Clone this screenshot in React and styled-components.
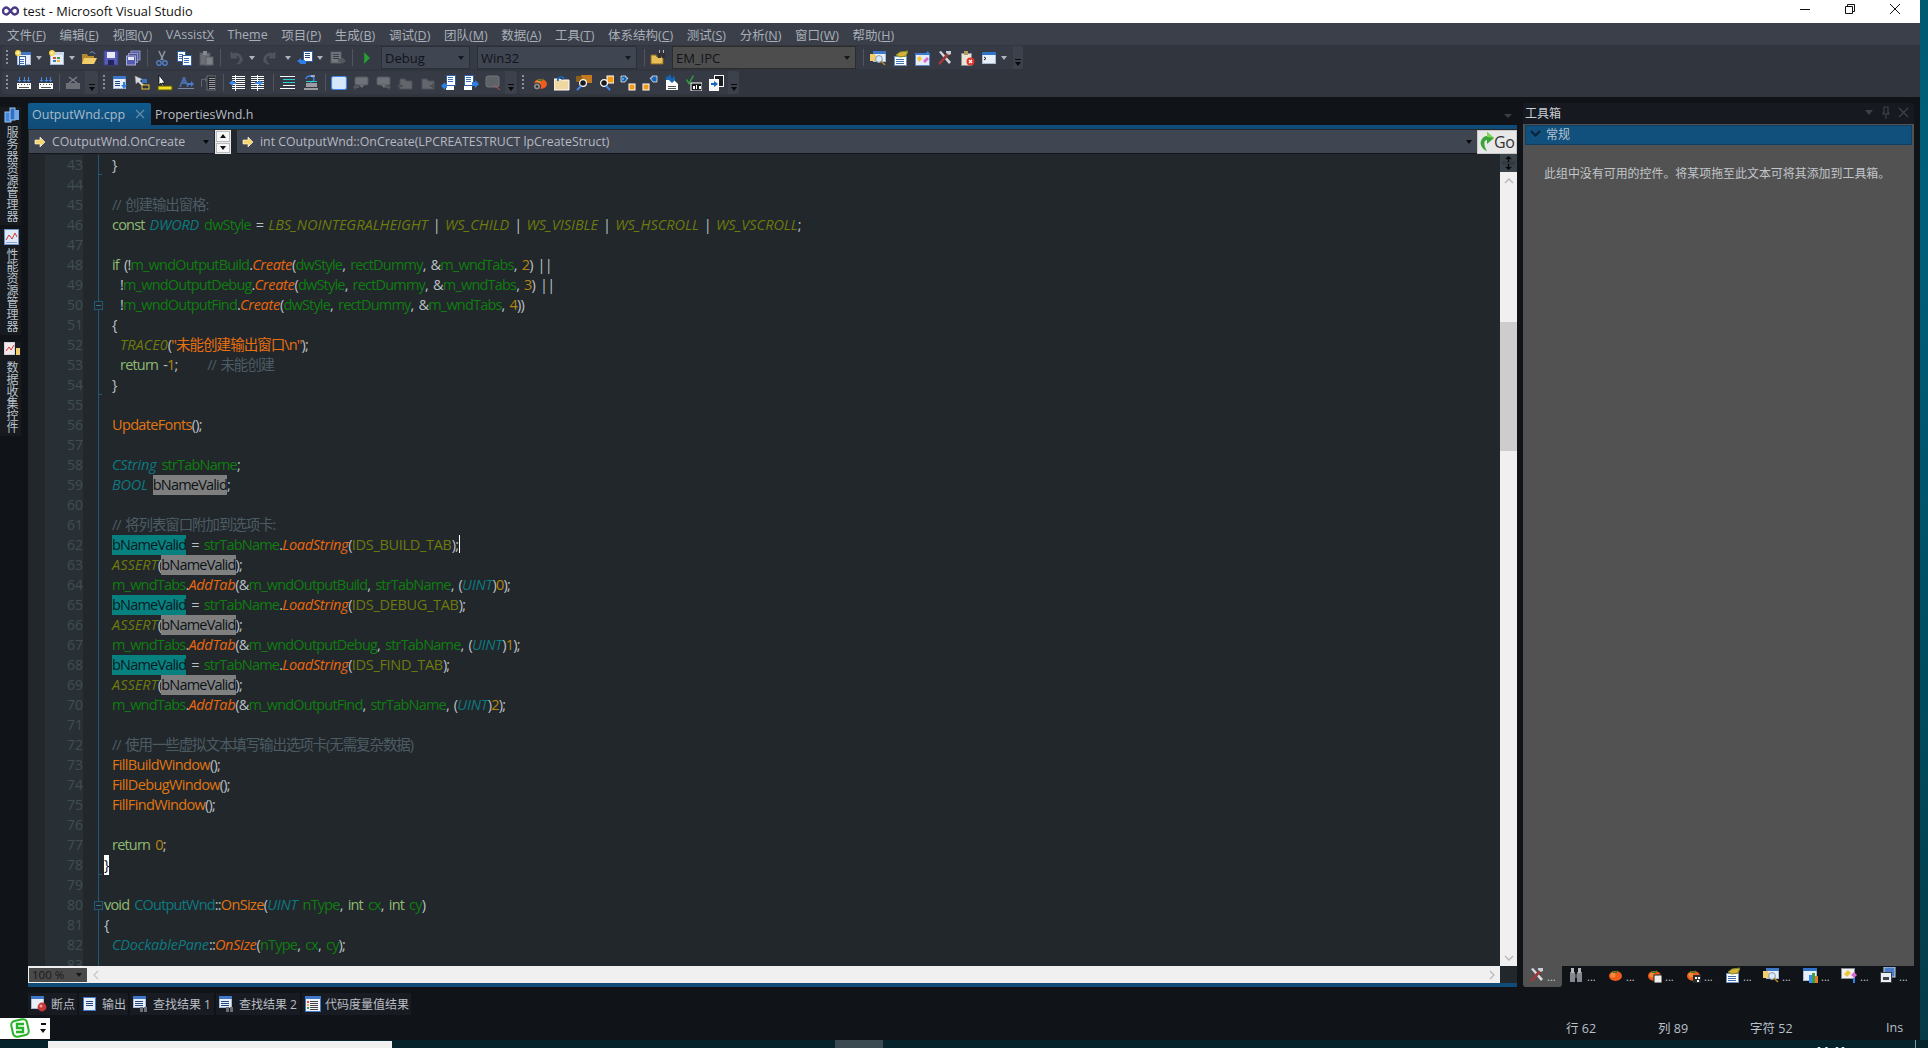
import React from "react";
import styled, { createGlobalStyle } from "styled-components";

const UI_FONT = `"Open Sans", "Noto Sans CJK SC", sans-serif`;

const GlobalStyle = createGlobalStyle`
  html, body { margin: 0; padding: 0; background: #101318; overflow: hidden; }
  * { box-sizing: border-box; }
`;

/* ---------- little toolbar pictures, all on a 16x16 grid ---------- */
const Lines = ({ x, y, w, n = 3, c = "#3f6fb0" }) => (
  <>
    {Array.from({ length: n }).map((_, i) => (
      <rect key={i} x={x} y={y + i * 2} width={w} height="1" fill={c} />
    ))}
  </>
);
const Sheet = ({ x, y, w, h, c = "#2f5f9f", f = "#fff" }) => (
  <rect x={x + 0.5} y={y + 0.5} width={w} height={h} fill={f} stroke={c} />
);
const Win = ({ x = 1, y = 1, w = 13, h = 13, bar = "#3f78c8" }) => (
  <>
    <rect x={x + 0.5} y={y + 0.5} width={w} height={h} fill="#e9eff8" stroke="#a8bad4" />
    <rect x={x} y={y} width={w + 1} height="3" fill={bar} />
  </>
);
const Star = ({ x = 3, y = 3 }) => (
  <>
    <circle cx={x} cy={y} r="3" fill="#f6d24a" />
    <circle cx={x} cy={y} r="1.4" fill="#fff3a8" />
  </>
);
const ArrowL = ({ y = 11, x = 0, c = "#2f7fe0" }) => (
  <path d={`M${x} ${y}l4-3v2h4v2h-4v2z`} fill={c} />
);
const Bubble = ({ c = "#6e7278" }) => (
  <>
    <rect x="2" y="2" width="13" height="8" rx="1.5" fill={c} stroke="#55585e" />
    <path d="M6 10h5l-2 3z" fill={c} />
  </>
);
const GreyFolder = ({ c = "#63666c" }) => (
  <path d="M3 4h5l1 2h6v8H3z" fill={c} stroke="#4f5258" />
);
const Tomato = () => (
  <>
    <ellipse cx="8.5" cy="9" rx="6.5" ry="5" fill="#ee5d1e" />
    <ellipse cx="6" cy="8" rx="2.5" ry="2.5" fill="#f58a3c" />
    <path d="M5 3.5l3 1.5 3-2-1 3H6z" fill="#2f7a2a" />
  </>
);
const Keys = ({ c = "#fff", a = "#4a90e8" }) => (
  <>
    <rect x="1" y="8" width="14" height="6" fill={c} />
    {[2, 5, 8, 11, 13].map((x) => (
      <rect key={x} x={x} y="9" width="1" height="1" fill="#555" />
    ))}
    <rect x="3" y="12" width="10" height="1" fill="#555" />
    {[3, 8, 12].map((x) => (
      <path key={x} d={`M${x} 2h1v3h1.5l-2 2-2-2H${x}z`} fill={a} />
    ))}
  </>
);
const Hammer = () => (
  <>
    <path d="M3 2l2-1 10 11-2 2z" fill="#d8dade" />
    <path d="M13 1l2 2L4 15l-2-2z" fill="#9a3a3a" />
    <path d="M10 1h5v3l-2 1-3-2z" fill="#c9ccd2" />
  </>
);
const Mag = ({ x = 9, y = 9 }) => (
  <>
    <circle cx={x} cy={y} r="3.4" fill="#d9ecff" stroke="#8a97a8" />
    <path d={`M${x + 2} ${y + 2}l4 4`} stroke="#b58a2a" strokeWidth="1.6" />
  </>
);
const Boxes = ({ dir }) => (
  <>
    <rect x={dir ? 9 : 1} y="9" width="6" height="6" fill="#f09a18" stroke="#fff" />
    <path d={dir ? "M1 1h5v2h2l-3 4H1zM3 3v2" : "M15 1h-5v2H8l3 4h4z"} fill="#1566b8" stroke="#fff" strokeWidth=".7" />
  </>
);

const ICONS = {
  newProject: (
    <>
      <Win x={2} y={2} h={12} />
      <Star />
      <Sheet x={4} y={6} w={6} h={9} />
      <Lines x={5} y={9} w={4} />
    </>
  ),
  addItem: (
    <>
      <Win x={1} y={2} h={12} bar="#c9d5e8" />
      <Star />
      <rect x="4" y="7" width="3" height="2" fill="#e04a3a" />
      <rect x="8" y="7" width="3" height="2" fill="#3aa04a" />
      <rect x="4" y="10" width="3" height="2" fill="#3a7ad0" />
      <rect x="8" y="10" width="3" height="2" fill="#f0b030" />
    </>
  ),
  open: (
    <>
      <path d="M1 4h5l1 2h6v8H1z" fill="#b58a2e" />
      <path d="M3 8h13l-3 6H1z" fill="#f2cd6c" />
      <path d="M9 3c2-2 4-1 5 1" fill="none" stroke="#7ea3d8" />
    </>
  ),
  save: (
    <>
      <rect x="1" y="1" width="14" height="14" fill="#565cb8" stroke="#3a3f8a" />
      <rect x="4" y="2" width="8" height="6" fill="#e8eaf6" />
      <rect x="5" y="10" width="6" height="5" fill="#23265c" />
    </>
  ),
  saveAll: (
    <>
      <rect x="6" y="1" width="9" height="9" fill="#5a5f9c" stroke="#8f94c8" />
      <rect x="3.5" y="3.5" width="9" height="9" fill="#4f5490" stroke="#8f94c8" />
      <rect x="1.5" y="6" width="9" height="9" fill="#565cb0" stroke="#a8acd8" />
      <rect x="3" y="7" width="6" height="3" fill="#e8eaf6" />
    </>
  ),
  cut: (
    <>
      <path d="M5 1l4 9M11 1L7 10" stroke="#8d96a6" strokeWidth="1.5" />
      <circle cx="5" cy="13" r="2.2" fill="none" stroke="#4f7fc4" strokeWidth="1.4" />
      <circle cx="11" cy="13" r="2.2" fill="none" stroke="#4f7fc4" strokeWidth="1.4" />
    </>
  ),
  copy: (
    <>
      <Sheet x={1} y={1} w={8} h={10} />
      <Lines x={3} y={4} w={4} />
      <Sheet x={6} y={5} w={9} h={10} />
      <Lines x={8} y={8} w={5} />
    </>
  ),
  paste: (
    <>
      <rect x="2" y="3" width="10" height="12" fill="#6b6e74" stroke="#54575c" />
      <rect x="5" y="1" width="4" height="4" fill="#85888e" />
      <rect x="8" y="7" width="7" height="8" fill="#7d8087" stroke="#5c5f65" />
    </>
  ),
  undo: <path d="M3 2v6h6L7 6c3-1 5 1 5 3s-1 4-3 5c4 0 6-3 5-6-1-4-6-6-9-4z" fill="#4e5158" stroke="#62656b" strokeWidth=".5" />,
  redo: <path d="M13 2v6H7l2-2C6 5 4 7 4 9s1 4 3 5c-4 0-6-3-5-6 1-4 6-6 9-4z" fill="#4e5158" stroke="#62656b" strokeWidth=".5" />,
  nav: (
    <>
      <Sheet x={6} y={1} w={9} h={10} />
      <Lines x={8} y={3} w={5} c="#24457c" />
      <ArrowL y={11} x={0} />
      <rect x="3" y="11" width="6" height="3" fill="#2f7fe0" />
    </>
  ),
  findGrey: (
    <>
      <rect x="1" y="2" width="10" height="11" fill="#75787e" stroke="#5a5d63" />
      <Lines x={3} y={4} w={6} c="#3a3d42" />
      <path d="M8 9h4V7l4 4-4 3v-2H8z" fill="#55585e" />
    </>
  ),
  run: <path d="M5 2l6 6-6 6z" fill="#2f9a3a" stroke="#1d6a26" strokeWidth=".6" />,
  folderFind: (
    <>
      <path d="M1 5h5l1 2h6v7H1z" fill="#e8be58" stroke="#8a6a22" />
      <rect x="8" y="2" width="3" height="6" fill="#2d2f33" />
      <rect x="12" y="2" width="3" height="6" fill="#2d2f33" />
      <rect x="9" y="0" width="1" height="3" fill="#bbb" />
      <rect x="13" y="0" width="1" height="3" fill="#bbb" />
    </>
  ),
  solutionFind: (
    <>
      <Win x={3} y={1} w={12} h={10} />
      <path d="M0 4h5l1 2h3v5H0z" fill="#f2cd6c" />
      <Mag x={9} y={9} />
    </>
  ),
  classView: (
    <>
      <Sheet x={2} y={6} w={12} h={9} c="#6f8fbf" />
      <Lines x={4} y={9} w={8} />
      <path d="M4 5l4-3 8-1-2 5-6 1z" fill="#d8b238" stroke="#7d8a2e" />
    </>
  ),
  props: (
    <>
      <Sheet x={1} y={3} w={14} h={12} c="#5c86c4" f="#e4ecf8" />
      <rect x="1" y="3" width="15" height="2" fill="#3f78c8" />
      <path d="M3 8l3-2 2 3-3 3z" fill="#f2c53a" />
      <path d="M9 11l4-4 2 2-4 4z" fill="#d86ad0" />
      <path d="M11 4l3-3 1 2-2 2z" fill="#2a86e8" />
    </>
  ),
  tools: <Hammer />,
  clipX: (
    <>
      <Sheet x={2} y={3} w={10} h={12} c="#8a8d94" f="#e9e4d6" />
      <rect x="5" y="1" width="4" height="4" fill="#b59a64" />
      <circle cx="11.5" cy="11.5" r="4" fill="#e0342a" />
      <path d="M10 10l3 3M13 10l-3 3" stroke="#fff" strokeWidth="1.2" />
    </>
  ),
  cmd: (
    <>
      <Win x={1} y={2} w={13} h={11} bar="#2f74c8" />
      <path d="M3 7l2 1.5L3 10" stroke="#111" fill="none" />
    </>
  ),
  keys1: <Keys />,
  keys2: <Keys a="#3c8cf0" />,
  keysGrey: (
    <>
      <rect x="1" y="8" width="14" height="6" fill="#6b6e74" />
      <path d="M4 2l8 6M12 2L4 8" stroke="#7b7e84" strokeWidth="1.5" />
    </>
  ),
  winDown: (
    <>
      <Win x={1} y={1} w={12} h={12} />
      <Lines x={3} y={6} w={5} c="#24457c" />
      <path d="M9 10h2V7h2v3h2l-3 4z" fill="#2f7fe0" />
    </>
  ),
  pointer: (
    <>
      <path d="M1 1l7 3-2 2 4 4-2 1-4-4-2 2z" fill="#d6dae0" stroke="#8a8d94" strokeWidth=".5" />
      <rect x="8" y="10" width="7" height="4" fill="#2f3238" stroke="#e8c83a" />
      <rect x="8" y="4" width="5" height="4" fill="#3a74c4" />
    </>
  ),
  cursor: (
    <>
      <path d="M2 0v10l2-2 2 4 1-1-2-3h3z" fill="#fff" stroke="#000" strokeWidth=".7" />
      <rect x="1" y="11" width="14" height="4" fill="#f0e020" stroke="#57550e" />
    </>
  ),
  fontA: (
    <>
      <path d="M1 12L5 2h2l4 10H9l-1-3H4l-1 3z" fill="#4a6aa8" />
      <path d="M9 8h4V6l3 3-3 3v-2H9z" fill="#4a7cc8" />
      <rect x="0" y="13" width="16" height="1" fill="#7a8aa0" />
    </>
  ),
  listGrey: (
    <>
      <rect x="7" y="1" width="9" height="14" fill="#24262b" stroke="#6b6e74" />
      <Lines x={9} y={3} w={6} n={6} c="#9a9da4" />
      <path d="M1 4h4V2l2 3-2 2V5H2v7H1z" fill="#60636a" />
    </>
  ),
  alignL: (
    <>
      <Lines x={3} y={1} w={13} n={7} c="#fff" />
      <rect x="6" y="0" width="1" height="16" fill="#fff" />
      <path d="M0 8l4-3v2h3v2H4v2z" fill="#3c8cf0" />
    </>
  ),
  alignR: (
    <>
      <Lines x={0} y={1} w={13} n={7} c="#fff" />
      <rect x="6" y="0" width="1" height="16" fill="#fff" />
      <path d="M12 8L8 5v2H4v2h4v2z" fill="#3c8cf0" />
    </>
  ),
  listCyan: (
    <>
      <rect x="0" y="1" width="15" height="1" fill="#fff" />
      <rect x="3" y="4" width="12" height="1" fill="#28d0d0" />
      <rect x="3" y="7" width="12" height="1" fill="#28d0d0" />
      <rect x="3" y="10" width="12" height="1" fill="#fff" />
      <rect x="0" y="13" width="15" height="1" fill="#fff" />
    </>
  ),
  listLoop: (
    <>
      <path d="M3 4a4 3 0 1 1 4 3" fill="none" stroke="#3c8cf0" strokeWidth="1.4" />
      <path d="M8 1h4M3 9h11M3 11h11M1 14h14" stroke="#fff" />
      <rect x="3" y="6" width="11" height="1" fill="#28d0d0" />
    </>
  ),
  block: <rect x="0.5" y="1.5" width="15" height="13" rx="2" fill="#d6e6fb" stroke="#3f88e6" strokeWidth="1.2" />,
  bubbleL: (
    <>
      <Bubble />
      <path d="M0 12l3-3v2h3v2H3v2z" fill="#55585e" />
    </>
  ),
  bubbleR: (
    <>
      <Bubble />
      <path d="M16 12l-3-3v2h-3v2h3v2z" fill="#55585e" />
    </>
  ),
  folderL: (
    <>
      <GreyFolder />
      <path d="M0 11l3-3v2h3v2H3v2z" fill="#4a4d52" />
    </>
  ),
  folderR: (
    <>
      <GreyFolder />
      <path d="M16 11l-3-3v2h-2v2h2v2z" fill="#4a4d52" />
    </>
  ),
  docL: (
    <>
      <Sheet x={5} y={0} w={9} h={10} />
      <Lines x={7} y={2} w={5} />
      <rect x="5" y="11" width="8" height="4" fill="#fff" />
      <path d="M0 11l4-4v2h2v4H4v2z" fill="#2f7fe0" />
    </>
  ),
  docR: (
    <>
      <Sheet x={1} y={0} w={9} h={10} />
      <Lines x={3} y={2} w={5} />
      <rect x="1" y="11" width="8" height="4" fill="#fff" />
      <path d="M16 9l-4-4v2H9v4h3v2z" fill="#2f7fe0" />
    </>
  ),
  bubbleX: (
    <>
      <rect x="1" y="1" width="13" height="11" rx="2" fill="#5e6167" stroke="#72757b" />
      <path d="M9 10l6 5" stroke="#b05a50" />
    </>
  ),
  tomatoGear: (
    <>
      <Tomato />
      <circle cx="5" cy="11.5" r="3.6" fill="#8b8e94" stroke="#2d2f33" />
      <circle cx="5" cy="11.5" r="1.2" fill="#2d2f33" />
    </>
  ),
  folderLoop: (
    <>
      <path d="M0 4h6l1 1h8v10H0z" fill="#f0d6a0" stroke="#fff" />
      <path d="M4 6a3 3 0 0 1 5-3" fill="none" stroke="#1566b8" strokeWidth="1.6" />
      <path d="M8 1l3 2-3 2z" fill="#1566b8" />
    </>
  ),
  findBox: (
    <>
      <rect x="5" y="0" width="11" height="8" fill="#c27a1c" />
      <rect x="0" y="1" width="6" height="6" fill="#8a5f1c" />
      <circle cx="7" cy="8" r="3.4" fill="#17191d" stroke="#fff" strokeWidth="1.2" />
      <path d="M5 11l-4 4" stroke="#3c8cf0" strokeWidth="1.8" />
    </>
  ),
  findBox2: (
    <>
      <rect x="9" y="1" width="7" height="7" fill="#f09a18" stroke="#fff" />
      <circle cx="6" cy="8" r="3.4" fill="#17191d" stroke="#fff" strokeWidth="1.2" />
      <path d="M8 11l4 4" stroke="#3c8cf0" strokeWidth="1.8" />
    </>
  ),
  boxIn: <Boxes />,
  boxOut: <Boxes dir />,
  pageDown: (
    <>
      <path d="M2 5h8l4 4v6H2z" fill="#fff" />
      <path d="M5 0h2v3h2v-2l2 1v3l-3 3-3-3H2V2l2-1v2z" fill="#1566b8" />
      <Lines x={4} y={11} w={8} n={2} c="#555" />
    </>
  ),
  spell: (
    <>
      <path d="M1 4l2 3 4-7 1 1-5 9-3-5z" fill="#2fa040" />
      <rect x="5" y="8" width="11" height="8" fill="#17191d" stroke="#fff" />
      <rect x="7" y="11" width="2" height="3" fill="#fff" />
      <rect x="10" y="10" width="1" height="4" fill="#fff" />
      <rect x="13" y="11" width="2" height="3" fill="#fff" />
    </>
  ),
  pages: (
    <>
      <Sheet x={6} y={0} w={9} h={11} c="#fff" f="#1c1e22" />
      <Sheet x={1} y={4} w={9} h={11} c="#fff" f="#f4f4f4" />
      <path d="M3 8h3V6l4 3-4 3v-2H3z" fill="#1566b8" />
    </>
  ),
  server: (
    <>
      <rect x="1" y="5" width="6" height="10" fill="#3f8ae0" stroke="#9fc4f0" />
      <rect x="6" y="1" width="5" height="12" fill="#2f6fc4" stroke="#9fc4f0" />
      <rect x="11" y="3" width="4" height="10" fill="#6fa8e8" />
    </>
  ),
  perf: (
    <>
      <rect x="0.5" y="0.5" width="14" height="15" fill="#dfe9f8" stroke="#6f93c8" />
      <path d="M2 11l3-5 3 4 3-6 2 4" fill="none" stroke="#d0382e" />
      <rect x="2" y="13" width="11" height="1" fill="#8fa6c8" />
    </>
  ),
  collect: (
    <>
      <rect x="0.5" y="0.5" width="10" height="12" fill="#f4e8e8" stroke="#d0d4da" />
      <path d="M2 9l3-4 2 3 3-5" fill="none" stroke="#d0382e" />
      <rect x="12" y="6" width="4" height="7" fill="#f2cd6c" />
    </>
  ),
  breakpoint: (
    <>
      <Win x={0} y={0} w={12} h={12} />
      <circle cx="11" cy="11" r="4.4" fill="#c8373a" />
      <circle cx="10" cy="10" r="1.5" fill="#f2a09a" />
    </>
  ),
  output: (
    <>
      <rect x="1.5" y="1.5" width="12" height="13" fill="#e9eff8" stroke="#3f78c8" />
      <Lines x={4} y={5} w={7} n={3} c="#24457c" />
    </>
  ),
  findResult: (
    <>
      <Win x={0} y={0} w={12} h={11} />
      <Lines x={2} y={5} w={8} c="#24457c" />
      <rect x="7" y="11" width="3" height="5" fill="#6b6e74" />
      <rect x="11" y="11" width="3" height="5" fill="#6b6e74" />
    </>
  ),
  metrics: (
    <>
      <rect x="0.5" y="0.5" width="15" height="15" fill="#f0f4fa" stroke="#3f78c8" />
      <rect x="0" y="0" width="16" height="3" fill="#3f78c8" />
      <Lines x={5} y={5} w={8} n={5} c="#444" />
      <rect x="2" y="5" width="2" height="2" fill="#e04a3a" />
      <rect x="2" y="8" width="2" height="2" fill="#f0b030" />
      <rect x="2" y="11" width="2" height="2" fill="#3aa04a" />
    </>
  ),
  binoculars: (
    <>
      <rect x="2" y="5" width="5" height="10" fill="#85888e" />
      <rect x="9" y="5" width="5" height="10" fill="#85888e" />
      <rect x="3" y="1" width="3" height="5" fill="#b4b7bc" />
      <rect x="10" y="1" width="3" height="5" fill="#b4b7bc" />
      <rect x="7" y="7" width="2" height="4" fill="#50535a" />
    </>
  ),
  tomato: <Tomato />,
  tomatoBox: (
    <>
      <Tomato />
      <rect x="8" y="8" width="8" height="8" fill="#f0f0f0" stroke="#222" />
    </>
  ),
  tomatoDots: (
    <>
      <Tomato />
      <rect x="8" y="8" width="8" height="8" fill="#2a2c30" />
      <rect x="10" y="10" width="2" height="2" fill="#fff" />
      <rect x="13" y="10" width="2" height="2" fill="#fff" />
      <rect x="12" y="13" width="2" height="2" fill="#fff" />
    </>
  ),
  toolbox: (
    <>
      <Win x={1} y={1} w={13} h={12} bar="#2f74c8" />
      <rect x="7" y="8" width="3" height="8" fill="#3c8cf0" />
      <rect x="10" y="6" width="3" height="10" fill="#3aa04a" />
      <rect x="13" y="9" width="3" height="7" fill="#e07a2a" />
    </>
  ),
  tagDiff: (
    <>
      <Sheet x={0} y={1} w={13} h={10} c="#8a8d94" f="#f0f0f0" />
      <path d="M3 7l4-4 3 3-4 4z" fill="#e8c83a" />
      <path d="M10 8l3-3 3 3-3 3z" fill="#d86ad0" />
      <path d="M12 11h2v5h-2z" fill="#2a86e8" />
    </>
  ),
  panels: (
    <>
      <rect x="4" y="0" width="11" height="10" fill="#4a7cc8" stroke="#c8d4e8" />
      <rect x="0.5" y="5.5" width="11" height="10" fill="#e9eff8" stroke="#3a3d42" />
      <rect x="3" y="10" width="6" height="3" fill="#444" />
    </>
  ),
};

const Ico = ({ name, size = 16, className }) => (
  <svg className={className} width={size} height={size} viewBox="0 0 16 16">
    {ICONS[name]}
  </svg>
);

/* ---------- toolbar data: [kind, gap before, width for combos, label] ---------- */
const TOOLBAR_ONE = [
  ["grip", 4], ["newProject", 7], ["caret", 4], ["addItem", 6], ["caret", 3], ["open", 5],
  ["save", 6], ["saveAll", 6], ["sep", 6], ["cut", 6], ["copy", 6], ["paste", 6], ["sep", 6],
  ["undo", 7], ["caret", 4], ["redo", 6], ["caret", 6], ["nav", 5], ["caret", 3], ["findGrey", 6],
  ["sep", 6], ["run", 6], ["combo", 6, 89, "Debug"], ["combo", 7, 160, "Win32"], ["sep", 7],
  ["folderFind", 5], ["combo", 6, 184, "EM_IPC", true], ["sep", 7], ["solutionFind", 6],
  ["classView", 6], ["props", 6], ["tools", 6], ["clipX", 7], ["cmd", 6], ["caret", 3], ["more", 4, 10],
];
const TOOLBAR_TWO = [
  ["grip", 4], ["keys1", 8], ["keys2", 6], ["sep", 5], ["keysGrey", 5], ["more", 3, 13],
];
const TOOLBAR_THREE = [
  ["grip", 3], ["winDown", 7], ["pointer", 6], ["cursor", 7], ["fontA", 5], ["listGrey", 6], ["sep", 7],
  ["alignL", 5], ["alignR", 6], ["sep", 6], ["listCyan", 6], ["listLoop", 7], ["sep", 6], ["block", 5],
  ["bubbleL", 6], ["bubbleR", 6], ["folderL", 6], ["folderR", 6], ["docL", 6], ["docR", 6], ["bubbleX", 6],
  ["more", 3, 12],
];
const TOOLBAR_FOUR = [
  ["grip", 3], ["tomatoGear", 8], ["folderLoop", 6], ["findBox", 6], ["findBox2", 6], ["boxOut", 6],
  ["boxIn", 6], ["pageDown", 6], ["spell", 6], ["pages", 6], ["more", 3, 11],
];

const MENU = [
  ["文件(", "F", ")"], ["编辑(", "E", ")"], ["视图(", "V", ")"], ["VAssist", "X", ""], ["The", "m", "e"],
  ["项目(", "P", ")"], ["生成(", "B", ")"], ["调试(", "D", ")"], ["团队(", "M", ")"], ["数据(", "A", ")"],
  ["工具(", "T", ")"], ["体系结构(", "C", ")"], ["测试(", "S", ")"], ["分析(", "N", ")"], ["窗口(", "W", ")"],
  ["帮助(", "H", ")"],
];

/* ---------- the code, token by token ---------- */
const ARGS = (n, close) => [
  ["op", "("], ["id", "dwStyle"], ["op", ", "], ["id", "rectDummy"], ["op", ", &"], ["id", "m_wndTabs"],
  ["op", ", "], ["num", n], ["op", close],
];
const SETNAME = (tab) => [
  ["tealHi", "bNameValid"], ["op", " = "], ["id", "strTabName"], ["op", "."], ["method", "LoadString"],
  ["op", "("], ["sym", tab], ["op", ");"],
];
const ASSERT = [["macro", "ASSERT"], ["op", "("], ["greyHi", "bNameValid"], ["op", ");"]];
const ADDTAB = (wnd, n) => [
  ["id", "m_wndTabs"], ["op", "."], ["method", "AddTab"], ["op", "(&"], ["id", wnd], ["op", ", "],
  ["id", "strTabName"], ["op", ", ("], ["type", "UINT"], ["op", ")"], ["num", n], ["op", ");"],
];

const CODE = [
  { n: 43, indent: 1, fold: "end", t: [["op", "}"]] },
  { n: 44 },
  { n: 45, indent: 1, t: [["comment", "// 创建输出窗格:"]] },
  {
    n: 46, indent: 1,
    t: [
      ["kw", "const "], ["type", "DWORD"], ["id", " dwStyle"], ["op", " = "], ["macro", "LBS_NOINTEGRALHEIGHT"],
      ["op", " | "], ["macro", "WS_CHILD"], ["op", " | "], ["macro", "WS_VISIBLE"], ["op", " | "],
      ["macro", "WS_HSCROLL"], ["op", " | "], ["macro", "WS_VSCROLL"], ["op", ";"],
    ],
  },
  { n: 47 },
  { n: 48, indent: 1, t: [["kw", "if "], ["op", "(!"], ["id", "m_wndOutputBuild"], ["op", "."], ["method", "Create"], ...ARGS("2", ") ||")] },
  { n: 49, indent: 2, t: [["op", "!"], ["id", "m_wndOutputDebug"], ["op", "."], ["method", "Create"], ...ARGS("3", ") ||")] },
  { n: 50, indent: 2, fold: "box", t: [["op", "!"], ["id", "m_wndOutputFind"], ["op", "."], ["method", "Create"], ...ARGS("4", "))")] },
  { n: 51, indent: 1, t: [["op", "{"]] },
  { n: 52, indent: 2, t: [["macro", "TRACE0"], ["op", "("], ["str", "\"未能创建输出窗口\\n\""], ["op", ");"]] },
  { n: 53, indent: 2, t: [["kw", "return "], ["op", "-"], ["num", "1"], ["op", ";      "], ["comment", "// 未能创建"]] },
  { n: 54, indent: 1, fold: "end", t: [["op", "}"]] },
  { n: 55 },
  { n: 56, indent: 1, t: [["func", "UpdateFonts"], ["op", "();"]] },
  { n: 57 },
  { n: 58, indent: 1, t: [["type", "CString"], ["id", " strTabName"], ["op", ";"]] },
  { n: 59, indent: 1, t: [["type", "BOOL"], ["id", " "], ["greyHi", "bNameValid"], ["op", ";"]] },
  { n: 60 },
  { n: 61, indent: 1, t: [["comment", "// 将列表窗口附加到选项卡:"]] },
  { n: 62, indent: 1, caret: true, t: SETNAME("IDS_BUILD_TAB") },
  { n: 63, indent: 1, t: ASSERT },
  { n: 64, indent: 1, t: ADDTAB("m_wndOutputBuild", "0") },
  { n: 65, indent: 1, t: SETNAME("IDS_DEBUG_TAB") },
  { n: 66, indent: 1, t: ASSERT },
  { n: 67, indent: 1, t: ADDTAB("m_wndOutputDebug", "1") },
  { n: 68, indent: 1, t: SETNAME("IDS_FIND_TAB") },
  { n: 69, indent: 1, t: ASSERT },
  { n: 70, indent: 1, t: ADDTAB("m_wndOutputFind", "2") },
  { n: 71 },
  { n: 72, indent: 1, t: [["comment", "// 使用一些虚拟文本填写输出选项卡(无需复杂数据)"]] },
  { n: 73, indent: 1, t: [["func", "FillBuildWindow"], ["op", "();"]] },
  { n: 74, indent: 1, t: [["func", "FillDebugWindow"], ["op", "();"]] },
  { n: 75, indent: 1, t: [["func", "FillFindWindow"], ["op", "();"]] },
  { n: 76 },
  { n: 77, indent: 1, t: [["kw", "return "], ["num", "0"], ["op", ";"]] },
  { n: 78, fold: "end", t: [["cursor", "}"]] },
  { n: 79 },
  {
    n: 80, fold: "box",
    t: [
      ["kw", "void "], ["ctype", "COutputWnd"], ["op", "::"], ["func", "OnSize"], ["op", "("], ["type", "UINT"],
      ["id", " nType"], ["op", ", "], ["kw", "int "], ["id", "cx"], ["op", ", "], ["kw", "int "], ["id", "cy"], ["op", ")"],
    ],
  },
  { n: 81, t: [["op", "{"]] },
  {
    n: 82, indent: 1,
    t: [
      ["type", "CDockablePane"], ["op", "::"], ["method", "OnSize"], ["op", "("], ["id", "nType"], ["op", ", "],
      ["id", "cx"], ["op", ", "], ["id", "cy"], ["op", ");"],
    ],
  },
  { n: 83 },
];

const BOTTOM_TABS = [
  ["breakpoint", "断点", 49], ["output", "输出", 49], ["findResult", "查找结果 1", 84],
  ["findResult", "查找结果 2", 84], ["metrics", "代码度量值结果", 109],
];
const TOOL_TABS = ["tools", "binoculars", "tomato", "tomatoBox", "tomatoDots", "classView", "solutionFind", "toolbox", "tagDiff", "panels"];

const renderToolItem = ([kind, gap, width, label, dim], i) => {
  if (kind === "grip") return <Grip key={i} $gap={gap} />;
  if (kind === "sep") return <ToolSep key={i} $gap={gap} />;
  if (kind === "caret") return <ToolCaret key={i} $gap={gap} />;
  if (kind === "more") return <More key={i} $w={width} />;
  if (kind === "combo")
    return (
      <ToolCombo key={i} $gap={gap} $w={width} $dim={dim}>
        {label}
        <ComboArrow />
      </ToolCombo>
    );
  return <ToolIcon key={i} name={kind} $gap={gap} />;
};

export default function App() {
  return (
    <Screen>
      <GlobalStyle />
      <Upper>
        <Window>
          <TitleBar>
            <svg width="17" height="12" viewBox="0 0 17 12">
              <path d="M4.5 2.5C7 2.5 10 9.500 12.5 9.500a3.500 3.500 0 0 0 0-7C10 2.500 7 9.500 4.500 9.500a3.500 3.500 0 0 1 0-7z" fill="none" stroke="#4a3a86" strokeWidth="2.4" />
            </svg>
            <TitleText>test - Microsoft Visual Studio</TitleText>
            <WindowButtons>
              <WindowButton viewBox="0 0 12 12">
                <path d="M1 6.5h10" stroke="#111" />
              </WindowButton>
              <WindowButton viewBox="0 0 12 12">
                <path d="M3.5 3.5V1.5h7v7h-2M1.5 3.5h7v7h-7z" fill="none" stroke="#111" />
              </WindowButton>
              <WindowButton viewBox="0 0 12 12">
                <path d="M1 1l10 10M11 1L1 11" stroke="#111" />
              </WindowButton>
            </WindowButtons>
          </TitleBar>

          <MenuBar>
            {MENU.map(([before, key, after]) => (
              <MenuItem key={before}>
                {before}
                <u>{key}</u>
                {after}
              </MenuItem>
            ))}
          </MenuBar>

          <ToolArea>
            <ToolRow>
              <ToolPanel $w={1021}>{TOOLBAR_ONE.map(renderToolItem)}</ToolPanel>
            </ToolRow>
            <ToolRow>
              <ToolPanel $w={96}>{TOOLBAR_TWO.map(renderToolItem)}</ToolPanel>
              <ToolPanel $w={417}>{TOOLBAR_THREE.map(renderToolItem)}</ToolPanel>
              <ToolPanel $w={220}>{TOOLBAR_FOUR.map(renderToolItem)}</ToolPanel>
            </ToolRow>
          </ToolArea>

          <Workspace>
            <SideRail>
              <SideGroup $top={10}>
                <Ico name="server" />
                <SideLabel>服务器资源管理器</SideLabel>
              </SideGroup>
              <SideGroup $top={4}>
                <Ico name="perf" />
                <SideLabel>性能资源管理器</SideLabel>
              </SideGroup>
              <SideGroup $top={7}>
                <Ico name="collect" />
                <SideLabel>数据收集控件</SideLabel>
              </SideGroup>
            </SideRail>

            <DocColumn>
              <TabStrip>
                <DocTab $active>
                  OutputWnd.cpp
                  <TabClose viewBox="0 0 10 10">
                    <path d="M1 1l8 8M9 1L1 9" stroke="#5f8aa8" strokeWidth="1.3" />
                  </TabClose>
                </DocTab>
                <DocTab>PropertiesWnd.h</DocTab>
                <TabOverflow />
              </TabStrip>
              <AccentLine />
              <NavBar>
                <NavCombo $w={185}>
                  <NavArrow viewBox="0 0 12 12">
                    <path d="M1 4h5V1l5 5-5 5V8H1z" fill="#f5d76e" stroke="#fff" strokeWidth=".6" />
                  </NavArrow>
                  <NavText>COutputWnd.OnCreate</NavText>
                  <ComboArrow $light />
                </NavCombo>
                <Spinner>
                  <SpinPart>
                    <SpinArrow $up />
                  </SpinPart>
                  <SpinPart>
                    <SpinArrow />
                  </SpinPart>
                </Spinner>
                <NavCombo $grow>
                  <NavArrow viewBox="0 0 12 12">
                    <path d="M1 4h5V1l5 5-5 5V8H1z" fill="#f5d76e" stroke="#fff" strokeWidth=".6" />
                  </NavArrow>
                  <NavText>int COutputWnd::OnCreate(LPCREATESTRUCT lpCreateStruct)</NavText>
                  <ComboArrow $light />
                </NavCombo>
                <GoButton>
                  <svg width="16" height="20" viewBox="0 0 16 20">
                    <path d="M9 19.500C3 16 1 11 4 7c1-2 3-3 5-3V0l7 6-7 6V8C6 8 5 12 9 19.500z" fill="#3aa33a" />
                    <path d="M9 0l7 6-7-1z" fill="#7bd84f" />
                  </svg>
                  Go
                </GoButton>
              </NavBar>
              <EditorArea>
                <CodePane>
                  {CODE.map((line) => (
                    <CodeRow key={line.n}>
                      <LineNumber>{line.n}</LineNumber>
                      <FoldCell $end={line.fold === "end"}>{line.fold === "box" && <FoldBox />}</FoldCell>
                      <CodeText $indent={line.indent || 0}>
                        {(line.t || []).map(([kind, text], i) => (
                          <Tok key={i} $kind={kind}>
                            {text}
                          </Tok>
                        ))}
                        {line.caret && <TextCaret />}
                      </CodeText>
                    </CodeRow>
                  ))}
                </CodePane>
                <VScroll>
                  <SplitButton>
                    <svg width="13" height="14" viewBox="0 0 13 14">
                      <path d="M6.5 0l3 3h-6zM6.5 14l-3-3h6zM0 6h13M0 8h13M6 3h1v3H6zM6 8h1v3H6z" fill="#0a0a0a" stroke="#0a0a0a" strokeWidth=".3" />
                    </svg>
                  </SplitButton>
                  <ScrollChevron viewBox="0 0 10 6">
                    <path d="M1 5l4-4 4 4" fill="none" stroke="#b6b6b6" strokeWidth="1.3" />
                  </ScrollChevron>
                  <ScrollThumb />
                  <ScrollSpacer />
                  <ScrollChevron viewBox="0 0 10 6">
                    <path d="M1 1l4 4 4-4" fill="none" stroke="#b6b6b6" strokeWidth="1.3" />
                  </ScrollChevron>
                </VScroll>
              </EditorArea>
              <HScrollRow>
                <HTrack>
                  <ZoomCombo>
                    100 %
                    <ComboArrow />
                  </ZoomCombo>
                  <svg width="6" height="10" viewBox="0 0 6 10">
                    <path d="M5 1L1 5l4 4" fill="none" stroke="#c8c8c8" strokeWidth="1.2" />
                  </svg>
                  <ScrollSpacer />
                  <svg width="6" height="10" viewBox="0 0 6 10">
                    <path d="M1 1l4 4-4 4" fill="none" stroke="#b6b6b6" strokeWidth="1.2" />
                  </svg>
                </HTrack>
                <ScrollCorner />
              </HScrollRow>
              <AccentLine />
              <BottomTabs>
                {BOTTOM_TABS.map(([icon, label, width]) => (
                  <BottomTab key={label} $w={width}>
                    <Ico name={icon} />
                    {label}
                  </BottomTab>
                ))}
              </BottomTabs>
            </DocColumn>

            <ToolColumn>
              <PaneTitle>
                <span>工具箱</span>
                <PaneButtons>
                  <svg width="10" height="6" viewBox="0 0 10 6">
                    <path d="M1 0h8L5 5z" fill="#3c4148" />
                  </svg>
                  <svg width="10" height="13" viewBox="0 0 10 13">
                    <path d="M3 1h4v6h1v1H2V7h1zM5 8v5" fill="none" stroke="#3c4148" strokeWidth="1.2" />
                  </svg>
                  <svg width="11" height="11" viewBox="0 0 11 11">
                    <path d="M1 1l9 9M10 1l-9 9" stroke="#3c4148" strokeWidth="1.4" />
                  </svg>
                </PaneButtons>
              </PaneTitle>
              <PaneBody>
                <GroupHeader>
                  <svg width="11" height="8" viewBox="0 0 11 8">
                    <path d="M1 1l4.500 4.500L10 1" fill="none" stroke="#0a2238" strokeWidth="2" />
                  </svg>
                  常规
                </GroupHeader>
                <PaneHint>此组中没有可用的控件。将某项拖至此文本可将其添加到工具箱。</PaneHint>
              </PaneBody>
              <ToolTabs>
                {TOOL_TABS.map((name, i) => (
                  <ToolTab key={name} $active={i === 0}>
                    <Ico name={name} />
                    <span>...</span>
                  </ToolTab>
                ))}
              </ToolTabs>
            </ToolColumn>
          </Workspace>

          <StatusBar>
            <ImeWidget>
              <svg width="20" height="20" viewBox="0 0 20 20">
                <rect x="2" y="2" width="16" height="16" rx="4" fill="#fff" stroke="#27b327" strokeWidth="2" transform="rotate(-12 10 10)" />
                <path d="M14 6H7v4h6v4H6" fill="none" stroke="#27b327" strokeWidth="2.4" />
              </svg>
              <ImeMenu>
                <i />
                <b />
              </ImeMenu>
            </ImeWidget>
            <StatusCell $w={92}>行 62</StatusCell>
            <StatusCell $w={92}>列 89</StatusCell>
            <StatusCell $w={136}>字符 52</StatusCell>
            <StatusCell $w={34}>Ins</StatusCell>
          </StatusBar>
        </Window>
        <DesktopEdge />
      </Upper>
      <Taskbar>
        <TaskPreview />
        <TaskApp />
        <TaskClock>14:41</TaskClock>
        <TaskDivider />
      </Taskbar>
    </Screen>
  );
}

const TOKEN_STYLE = {
  kw: "color: #8fbb72;",
  id: "color: #0f7d10;",
  type: "color: #0c7a80; font-style: italic; letter-spacing: -0.2px;",
  ctype: "color: #0c7a80;",
  macro: "color: #6d7a0c; font-style: italic; letter-spacing: 0;",
  sym: "color: #6d7a0c; letter-spacing: -0.3px;",
  func: "color: #e0760f; letter-spacing: -0.65px;",
  method: "color: #ea670b; font-style: italic; letter-spacing: -0.3px;",
  num: "color: #b4860c;",
  op: "color: #b9c0c5;",
  comment: "color: #4c5c64; letter-spacing: -1.1px;",
  str: "color: #e8700f; letter-spacing: -0.95px;",
  tealHi: "color: #0a1a20; background: #078080; display: inline-block; height: 20px;",
  greyHi: "color: #0b1216; background: #7f7f7f; display: inline-block; height: 20px;",
  cursor: "color: #0b1216; background: #fff; display: inline-block; height: 20px; width: 5px;",
};

const Screen = styled.div`
  width: 1928px;
  height: 1048px;
  display: flex;
  flex-direction: column;
  font-family: ${UI_FONT};
  overflow: hidden;
`;

const Upper = styled.div`
  display: flex;
  height: 1040px;
`;

const Window = styled.div`
  width: 1920px;
  display: flex;
  flex-direction: column;
  background: #101318;
`;

const DesktopEdge = styled.div`
  width: 8px;
  background: linear-gradient(#005a70, #00607c 20%, #004a5c 70%, #063a46);
`;

const TitleBar = styled.div`
  height: 23px;
  background: #fff;
  display: flex;
  align-items: center;
  padding-left: 2px;
  padding-bottom: 1px;
  flex: none;
`;

const TitleText = styled.div`
  margin-left: 4px;
  font-size: 12.8px;
  color: #111;
`;

const WindowButtons = styled.div`
  margin-left: auto;
  display: flex;
  gap: 33px;
  padding-right: 19px;
`;

const WindowButton = styled.svg`
  width: 12px;
  height: 12px;
  margin-top: -4px;
`;

const MenuBar = styled.div`
  height: 22px;
  flex: none;
  background: #3a3f4a;
  display: flex;
  align-items: center;
`;

const MenuItem = styled.div`
  padding: 0 7px;
  font-size: 12.5px;
  color: #a9afb8;
  white-space: nowrap;
  margin-right: -0.4px;
`;

const ToolArea = styled.div`
  height: 52px;
  flex: none;
  background: #31353e;
  padding: 1px 0 0 2px;
  display: flex;
  flex-direction: column;
  gap: 2px;
`;

const ToolRow = styled.div`
  display: flex;
  gap: 2px;
  height: 23px;
`;

const ToolPanel = styled.div`
  width: ${(p) => p.$w}px;
  display: flex;
  align-items: center;
  background: #363a45;
  border-radius: 3px;
`;

const Grip = styled.div`
  margin-left: ${(p) => p.$gap}px;
  width: 2px;
  height: 15px;
  flex: none;
  background: repeating-linear-gradient(#8a8f99 0 2px, transparent 2px 4px);
`;

const ToolSep = styled.div`
  margin-left: ${(p) => p.$gap}px;
  width: 1px;
  height: 17px;
  flex: none;
  background: #50555f;
`;

const ToolIcon = styled(Ico)`
  margin-left: ${(p) => p.$gap}px;
  flex: none;
`;

const ToolCaret = styled.div`
  margin-left: ${(p) => p.$gap}px;
  width: 8px;
  height: 4px;
  flex: none;
  position: relative;
  &::after {
    content: "";
    position: absolute;
    left: 1px;
    top: 0;
    border-left: 3px solid transparent;
    border-right: 3px solid transparent;
    border-top: 4px solid #aeb2ba;
  }
`;

const More = styled.div`
  width: ${(p) => p.$w}px;
  height: 100%;
  flex: none;
  margin-left: auto;
  background: #3c414c;
  border-radius: 0 3px 3px 0;
  display: flex;
  flex-direction: column;
  align-items: center;
  justify-content: flex-end;
  padding-bottom: 3px;
  &::before {
    content: "";
    width: 6px;
    height: 1px;
    background: #0a0a0a;
    margin-bottom: 2px;
  }
  &::after {
    content: "";
    border-left: 3px solid transparent;
    border-right: 3px solid transparent;
    border-top: 4px solid #0a0a0a;
  }
`;

const ToolCombo = styled.div`
  margin-left: ${(p) => p.$gap}px;
  width: ${(p) => p.$w}px;
  height: 23px;
  flex: none;
  background: ${(p) => (p.$dim ? "#4d4d4d" : "#404552")};
  border: 1px solid ${(p) => (p.$dim ? "#2c2c2c" : "#2b2f37")};
  color: #11141a;
  font-size: 13px;
  padding-left: 3px;
  display: flex;
  align-items: center;
  justify-content: space-between;
`;

const ComboArrow = styled.span`
  flex: none;
  margin: 0 5px;
  border-left: 3px solid transparent;
  border-right: 3px solid transparent;
  border-top: 4px solid ${(p) => (p.$light ? "#0a0a0a" : "#15181d")};
`;

const Workspace = styled.div`
  flex: 1;
  min-height: 0;
  display: flex;
`;

const SideRail = styled.div`
  width: 28px;
  flex: none;
  display: flex;
  flex-direction: column;
`;

const SideGroup = styled.div`
  width: 21px;
  margin-top: ${(p) => p.$top}px;
  background: #171b20;
  padding: 0 0 3px 4px;
  display: flex;
  flex-direction: column;
  gap: 3px;
`;

const SideLabel = styled.div`
  writing-mode: vertical-rl;
  align-self: flex-start;
  font-size: 12px;
  line-height: 14px;
  color: #bcc3cb;
`;

const DocColumn = styled.div`
  width: 1489px;
  flex: none;
  padding-top: 6px;
  display: flex;
  flex-direction: column;
`;

const TabStrip = styled.div`
  height: 22px;
  flex: none;
  display: flex;
  position: relative;
`;

const DocTab = styled.div`
  width: ${(p) => (p.$active ? "123px" : "auto")};
  height: 22px;
  padding: 0 4px;
  display: flex;
  align-items: center;
  justify-content: space-between;
  font-size: 12.5px;
  color: ${(p) => (p.$active ? "#a9bccb" : "#b9bdc3")};
  background: ${(p) => (p.$active ? "linear-gradient(#0f5a8c, #114c78)" : "transparent")};
  border-radius: 2px 2px 0 0;
  white-space: nowrap;
`;

const TabClose = styled.svg`
  width: 10px;
  height: 10px;
  margin-right: 2px;
`;

const TabOverflow = styled.div`
  position: absolute;
  right: 5px;
  top: 11px;
  border-left: 4px solid transparent;
  border-right: 4px solid transparent;
  border-top: 4px solid #3a3f47;
`;

const AccentLine = styled.div`
  height: 4px;
  flex: none;
  background: #114c78;
`;

const NavBar = styled.div`
  height: 25px;
  flex: none;
  display: flex;
  align-items: stretch;
  padding: 1px 0 0 1px;
  background: #22272b;
`;

const NavCombo = styled.div`
  width: ${(p) => (p.$grow ? "auto" : `${p.$w}px`)};
  flex: ${(p) => (p.$grow ? 1 : "none")};
  margin-left: ${(p) => (p.$grow ? 6 : 0)}px;
  background: #404552;
  border-bottom: 1px solid #14171b;
  display: flex;
  align-items: center;
  padding-left: 5px;
  font-size: 12.3px;
  color: #b6bac1;
`;

const NavArrow = styled.svg`
  width: 12px;
  height: 12px;
  flex: none;
`;

const NavText = styled.span`
  margin-left: 6px;
  flex: 1;
  white-space: nowrap;
`;

const Spinner = styled.div`
  width: 16px;
  background: #e8e8e8;
  display: flex;
  flex-direction: column;
  margin-left: 1px;
  padding: 1px;
  gap: 1px;
`;

const SpinPart = styled.div`
  flex: 1;
  background: #f6f6f6;
  border: 1px solid #bdbdbd;
  display: flex;
  align-items: center;
  justify-content: center;
`;

const SpinArrow = styled.span`
  border-left: 3px solid transparent;
  border-right: 3px solid transparent;
  ${(p) => (p.$up ? "border-bottom: 4px solid #111;" : "border-top: 4px solid #111;")}
`;

const GoButton = styled.div`
  width: 40px;
  flex: none;
  background: #e8e8e8;
  border: 1px solid #c8c8c8;
  display: flex;
  align-items: center;
  font-size: 16px;
  letter-spacing: -0.3px;
  color: #333;
`;

const EditorArea = styled.div`
  height: 812px;
  flex: none;
  display: flex;
  background: #22272b;
`;

const CodePane = styled.div`
  flex: 1;
  min-width: 0;
  padding-top: 1px;
  overflow: hidden;
`;

const CodeRow = styled.div`
  height: 20px;
  display: flex;
`;

const LineNumber = styled.div`
  width: 38px;
  margin-left: 17px;
  flex: none;
  background: #293035;
  text-align: right;
  font-size: 14px;
  line-height: 20px;
  color: #3f4e50;
`;

const FoldCell = styled.div`
  width: 21px;
  flex: none;
  position: relative;
  &::before {
    content: "";
    position: absolute;
    left: 15px;
    top: 0;
    bottom: 0;
    width: 1px;
    background: #1e5a78;
  }
  ${(p) =>
    p.$end &&
    `&::after {
      content: "";
      position: absolute;
      left: 15px;
      bottom: 0;
      width: 4px;
      height: 1px;
      background: #1e5a78;
    }`}
`;

const FoldBox = styled.div`
  position: absolute;
  left: 11px;
  top: 6px;
  width: 9px;
  height: 9px;
  border: 1px solid #1e5a78;
  background: #22272b;
  &::after {
    content: "";
    position: absolute;
    left: 1px;
    top: 3px;
    width: 5px;
    height: 1px;
    background: #2f7398;
  }
`;

const CodeText = styled.div`
  padding-left: ${(p) => p.$indent * 8}px;
  font-size: 14.5px;
  line-height: 20px;
  letter-spacing: -0.8px;
  word-spacing: 2px;
  white-space: pre;
`;

const Tok = styled.span`
  ${(p) => TOKEN_STYLE[p.$kind]}
`;

const TextCaret = styled.span`
  display: inline-block;
  width: 1px;
  height: 18px;
  margin-left: 1px;
  vertical-align: top;
  background: #fff;
`;

const VScroll = styled.div`
  width: 17px;
  flex: none;
  background: #f0f0f0;
  display: flex;
  flex-direction: column;
  align-items: center;
`;

const SplitButton = styled.div`
  width: 17px;
  height: 18px;
  flex: none;
  background: #3b434b;
  display: flex;
  align-items: center;
  justify-content: center;
`;

const ScrollChevron = styled.svg`
  width: 10px;
  height: 6px;
  flex: none;
  margin: 6px 0 5px;
`;

const ScrollThumb = styled.div`
  width: 17px;
  height: 129px;
  flex: none;
  margin-top: 133px;
  background: #cdcdcd;
`;

const ScrollSpacer = styled.div`
  flex: 1;
`;

const HScrollRow = styled.div`
  height: 17px;
  flex: none;
  display: flex;
`;

const HTrack = styled.div`
  flex: 1;
  background: #f0f0f0;
  display: flex;
  align-items: center;
  gap: 6px;
  padding: 0 5px 0 1px;
`;

const ZoomCombo = styled.div`
  width: 58px;
  height: 14px;
  background: #4a4a4a;
  color: #16191d;
  font-size: 11.5px;
  line-height: 14px;
  padding-left: 3px;
  display: flex;
  align-items: center;
  justify-content: space-between;
`;

const ScrollCorner = styled.div`
  width: 17px;
  background: #22272b;
`;

const BottomTabs = styled.div`
  margin-top: 6px;
  height: 22px;
  display: flex;
  gap: 2px;
`;

const BottomTab = styled.div`
  width: ${(p) => p.$w}px;
  background: #181c22;
  display: flex;
  align-items: center;
  gap: 4px;
  padding: 0 0 1px 3px;
  font-size: 12px;
  color: #b8bdc3;
  white-space: nowrap;
`;

const ToolColumn = styled.div`
  width: 391px;
  flex: none;
  margin-left: 6px;
  padding-top: 6px;
  display: flex;
  flex-direction: column;
`;

const PaneTitle = styled.div`
  height: 21px;
  flex: none;
  background: #161a20;
  border-radius: 3px 3px 0 0;
  padding: 0 5px 2px 2px;
  display: flex;
  align-items: center;
  justify-content: space-between;
  font-size: 12px;
  color: #c8cdd2;
`;

const PaneButtons = styled.div`
  display: flex;
  align-items: center;
  gap: 7px;
`;

const PaneBody = styled.div`
  height: 842px;
  flex: none;
  background: #525252;
  padding: 1px 2px;
`;

const GroupHeader = styled.div`
  height: 20px;
  background: #114f7d;
  border: 1px solid #0f3f62;
  display: flex;
  align-items: center;
  gap: 5px;
  padding: 0 0 2px 4px;
  font-size: 12px;
  color: #b5c4cf;
`;

const PaneHint = styled.div`
  margin: 20px 0 0 19px;
  font-size: 11.95px;
  line-height: 18px;
  color: #c2c6ca;
  white-space: nowrap;
`;

const ToolTabs = styled.div`
  height: 21px;
  flex: none;
  display: flex;
`;

const ToolTab = styled.div`
  width: 39px;
  flex: none;
  padding: 0 0 3px ${(p) => (p.$active ? 5 : 6)}px;
  background: ${(p) => (p.$active ? "#525252" : "transparent")};
  border-radius: 0 0 3px 3px;
  display: flex;
  align-items: center;
  gap: 3px;
  font-size: 11px;
  color: #c8cdd2;
  span {
    margin-top: 3px;
  }
`;

const StatusBar = styled.div`
  height: 25px;
  flex: none;
  display: flex;
  align-items: center;
  padding-bottom: 1px;
  font-size: 12.5px;
  color: #b8c0c8;
`;

const ImeWidget = styled.div`
  width: 50px;
  height: 21px;
  margin-top: 2px;
  margin-right: 1516px;
  flex: none;
  background: #fff;
  display: flex;
  align-items: center;
  padding-left: 10px;
  gap: 10px;
`;

const ImeMenu = styled.div`
  display: flex;
  flex-direction: column;
  align-items: center;
  gap: 4px;
  i {
    width: 5px;
    height: 2px;
    background: #111;
  }
  b {
    border-left: 3px solid transparent;
    border-right: 3px solid transparent;
    border-top: 4px solid #111;
  }
`;

const StatusCell = styled.div`
  width: ${(p) => p.$w}px;
  flex: none;
  white-space: nowrap;
`;

const Taskbar = styled.div`
  height: 8px;
  flex: none;
  background: #06232b;
  display: flex;
  overflow: hidden;
  position: relative;
`;

const TaskPreview = styled.div`
  width: 344px;
  margin-left: 48px;
  margin-top: 1px;
  flex: none;
  background: #f0f0f0;
`;

const TaskApp = styled.div`
  width: 48px;
  margin-left: 443px;
  flex: none;
  background: #3a4a50;
`;

const TaskClock = styled.div`
  position: absolute;
  left: 1815px;
  top: 5px;
  color: #fff;
  font-size: 12px;
  line-height: 14px;
  font-weight: 700;
`;

const TaskDivider = styled.div`
  position: absolute;
  left: 1915px;
  top: 0;
  width: 1px;
  height: 8px;
  background: #8a9ba0;
`;
